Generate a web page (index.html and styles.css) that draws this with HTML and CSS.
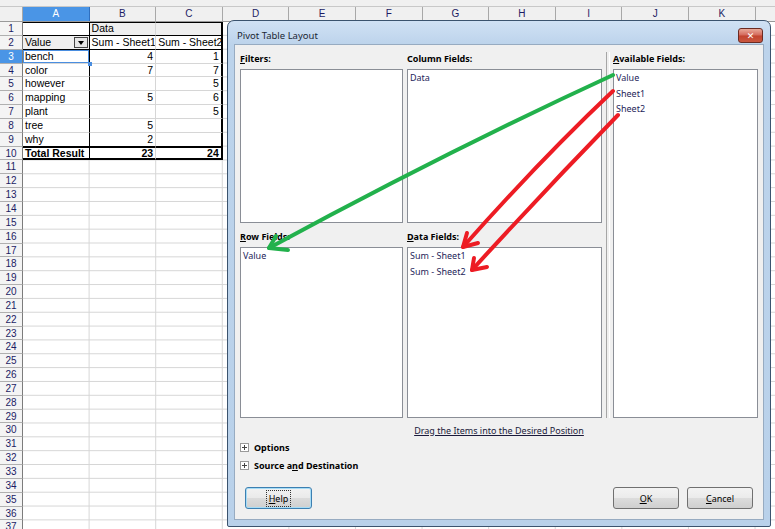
FILE: index.html
```html
<!DOCTYPE html>
<html lang="en">
	<head>
		<meta charset="UTF-8" />
		<meta name="viewport" content="width=device-width, initial-scale=1.0" />
		<title>Pivot Table Layout</title>

		<link rel="stylesheet" href="styles.css">
	</head>
	<body>
		<div class="sheet">
			<div class="topbar"></div>
			<div class="colheads">
				<div class="ch corner"></div>
				<div class="ch sel">A</div>
				<div class="ch">B</div>
				<div class="ch">C</div>
				<div class="ch">D</div>
				<div class="ch">E</div>
				<div class="ch">F</div>
				<div class="ch">G</div>
				<div class="ch">H</div>
				<div class="ch">I</div>
				<div class="ch">J</div>
				<div class="ch">K</div>
				<div class="ch last"></div>
			</div>
			<div class="grid">
				<div class="rowheads">
					<div class="rh">1</div>
					<div class="rh">2</div>
					<div class="rh sel">3</div>
					<div class="rh">4</div>
					<div class="rh">5</div>
					<div class="rh">6</div>
					<div class="rh">7</div>
					<div class="rh">8</div>
					<div class="rh">9</div>
					<div class="rh">10</div>
					<div class="rh">11</div>
					<div class="rh">12</div>
					<div class="rh">13</div>
					<div class="rh">14</div>
					<div class="rh">15</div>
					<div class="rh">16</div>
					<div class="rh">17</div>
					<div class="rh">18</div>
					<div class="rh">19</div>
					<div class="rh">20</div>
					<div class="rh">21</div>
					<div class="rh">22</div>
					<div class="rh">23</div>
					<div class="rh">24</div>
					<div class="rh">25</div>
					<div class="rh">26</div>
					<div class="rh">27</div>
					<div class="rh">28</div>
					<div class="rh">29</div>
					<div class="rh">30</div>
					<div class="rh">31</div>
					<div class="rh">32</div>
					<div class="rh">33</div>
					<div class="rh">34</div>
					<div class="rh">35</div>
					<div class="rh">36</div>
					<div class="rh">37</div>
				</div>
				<div class="cells">
					<div class="pivot">
						<div class="c a r1"></div>
						<div class="c r1 hd">Data</div>
						<div class="c r1 hd end"></div>

						<div class="c a r2 hd field">Value<span class="dd"></span></div>
						<div class="c r2">Sum - Sheet1</div>
						<div class="c r2 end">Sum - Sheet2</div>

						<div class="c a cur">bench</div>
						<div class="c num">4</div>
						<div class="c num end">1</div>

						<div class="c a">color</div>
						<div class="c num">7</div>
						<div class="c num end">7</div>

						<div class="c a">however</div>
						<div class="c num"></div>
						<div class="c num end">5</div>

						<div class="c a">mapping</div>
						<div class="c num">5</div>
						<div class="c num end">6</div>

						<div class="c a">plant</div>
						<div class="c num"></div>
						<div class="c num end">5</div>

						<div class="c a">tree</div>
						<div class="c num">5</div>
						<div class="c num end"></div>

						<div class="c a r9">why</div>
						<div class="c num r9">2</div>
						<div class="c num r9 end"></div>

						<div class="c a total">Total Result</div>
						<div class="c num total">23</div>
						<div class="c num total end">24</div>
					</div>
				</div>
			</div>
		</div>

		<div class="dialog">
			<div class="titlebar">
				<span class="title">Pivot Table Layout</span>
				<button class="close">&#10005;</button>
			</div>
			<div class="client">
				<div class="fields">
					<div class="left">
						<div class="lbl"><u>F</u>ilters:</div>
						<div class="lbl">Column Fields:</div>
						<div class="box"></div>
						<div class="box">
							<div class="item">Data</div>
						</div>
						<div class="lbl"><u>R</u>ow Fields:</div>
						<div class="lbl"><u>D</u>ata Fields:</div>
						<div class="box">
							<div class="item">Value</div>
						</div>
						<div class="box">
							<div class="item">Sum - Sheet1</div>
							<div class="item">Sum - Sheet2</div>
						</div>
					</div>
					<div class="sep"></div>
					<div class="right">
						<div class="lbl"><u>A</u>vailable Fields:</div>
						<div class="box">
							<div class="item">Value</div>
							<div class="item">Sheet1</div>
							<div class="item">Sheet2</div>
						</div>
					</div>
				</div>
				<div class="hint"><u>Drag the Items into the Desired Position</u></div>
				<div class="exp first"><span class="plus"></span>Options</div>
				<div class="exp"><span class="plus"></span>Source a<u>n</u>d Destination</div>
				<div class="buttons">
					<button class="btn help"><span class="focus"><u>H</u>elp</span></button>
					<span class="spacer"></span>
					<button class="btn"><u>O</u>K</button>
					<button class="btn"><u>C</u>ancel</button>
				</div>
			</div>
		</div>

		<svg class="arrows" width="775" height="529" viewBox="0 0 775 529">
			<g fill="none" stroke-width="4" stroke-linecap="round" stroke-linejoin="round">
				<path stroke="#22b14c" d="M613 75 Q450 150 269 248" />
				<path stroke="#22b14c" d="M276 236 L269 248 L288 250" />
				<path stroke="#ed1c24" d="M613 91 Q540 160 463 247" />
				<path stroke="#ed1c24" d="M467 233 L463 247 L478 243" />
				<path stroke="#ed1c24" d="M618 115 Q545 190 472 270" />
				<path stroke="#ed1c24" d="M474 258 L472 270 L487 267" />
			</g>
		</svg>
	</body>
</html>
```

FILE: styles.css
```css
* {
	margin: 0;
	padding: 0;
	box-sizing: border-box;
}
body {
	width: 775px;
	height: 529px;
	overflow: hidden;
	position: relative;
	background-color: #fff;
	font-family: "Liberation Sans", Arial, sans-serif;
}

/* spreadsheet behind the dialog */
.topbar {
	height: 7px;
	background-color: #f0f0f0;
	border-bottom: 1px solid #c8c8c8;
}
.colheads {
	display: grid;
	grid-template-columns: 23px repeat(11, 66.6px) 1fr;
	height: 15px;
	background-color: #f0f0f0;
	border-bottom: 1px solid #9a9a9a;
}
.ch {
	border-right: 1px solid #a8a8a8;
	font-size: 10px;
	line-height: 14px;
	text-align: center;
	color: #1c1c64;
}
.ch.sel {
	background-color: #4a95e6;
	border-right-color: #2f6fbf;
	color: #fff;
}
.ch.last {
	border-right: none;
}
.grid {
	display: flex;
}
.rowheads {
	width: 23px;
	flex-shrink: 0;
}
.rh {
	height: 13.85px;
	background-color: #f4f4f4;
	border-bottom: 1px solid #b0b0b0;
	border-right: 1px solid #7c7c7c;
	font-size: 10px;
	line-height: 13px;
	text-align: center;
	color: #1c1c64;
}
.rh.sel {
	background-color: #4a95e6;
	color: #fff;
}
.cells {
	flex: 1;
	height: 513px;
	background-image:
		linear-gradient(to right, transparent 65.6px, #d6d6d6 65.6px),
		linear-gradient(to bottom, transparent 12.85px, #d6d6d6 12.85px);
	background-size: 66.6px 100%, 100% 13.85px;
}
.pivot {
	display: grid;
	grid-template-columns: 66.6px 66.6px 66.6px;
	grid-template-rows: repeat(10, 13.85px);
	width: 199.8px;
}
.c {
	position: relative;
	background-color: #fff;
	border-right: 1px solid #d6d6d6;
	border-bottom: 1px solid #d6d6d6;
	padding: 0 2px;
	font-size: 10.5px;
	line-height: 12.8px;
	white-space: nowrap;
	overflow: hidden;
	color: #000;
}
.c.num {
	text-align: right;
}
.c.a {
	border-right-color: #000;
}
.c.end {
	border-right: 2px solid #000;
}
.c.r1 {
	border-top: 1px solid #000;
	border-bottom-color: #000;
	line-height: 11.8px;
}
.c.r2,
.c.r9 {
	border-bottom-color: #000;
}
.c.hd {
	background-color: #efefef;
}
.c.field {
	display: flex;
	justify-content: space-between;
	align-items: center;
	padding-right: 1px;
	overflow: visible;
}
.dd {
	width: 14px;
	height: 11px;
	border: 1px solid #444;
	background: #e6e6e6;
	position: relative;
}
.dd::after {
	content: "";
	position: absolute;
	left: 3px;
	top: 3px;
	border-left: 3.5px solid transparent;
	border-right: 3.5px solid transparent;
	border-top: 4px solid #000;
}
.c.cur {
	overflow: visible;
	box-shadow: inset 0 0 0 1px #4a8ee0;
}
.c.cur::after {
	content: "";
	position: absolute;
	right: -3px;
	bottom: -3px;
	width: 4px;
	height: 4px;
	background-color: #4a8ee0;
	z-index: 2;
}
.c.total {
	font-weight: bold;
	border-top: 1px solid #000;
	border-bottom: 2px solid #000;
	line-height: 11px;
}

/* dialog window */
.dialog {
	position: absolute;
	left: 227px;
	top: 20px;
	width: 544px;
	height: 507px;
	display: flex;
	flex-direction: column;
	padding: 0 6px 6px;
	border: 1px solid #3b536e;
	border-radius: 7px 7px 2px 2px;
	background: linear-gradient(#d0e1f4, #bcd3eb 24px, #b9d1ea);
	font-family: "Noto Sans", "Liberation Sans", sans-serif;
	font-size: 9px;
	z-index: 5;
}
.titlebar {
	height: 23px;
	display: flex;
	align-items: flex-start;
	padding-left: 3px;
}
.title {
	flex: 1;
	padding-top: 8px;
	font-size: 9.5px;
	line-height: 13px;
	color: #1b2633;
}
.close {
	width: 25px;
	height: 15px;
	margin: 7px 1px 0 0;
	border: 1px solid #6b2b22;
	border-radius: 3px;
	background: linear-gradient(#e9a999, #d3685a 48%, #c2432e 52%, #c9573f);
	color: #fff;
	font-family: "DejaVu Sans", sans-serif;
	font-size: 9px;
	font-weight: bold;
	line-height: 12px;
}
.client {
	flex: 1;
	display: flex;
	flex-direction: column;
	padding: 6px 5px 0;
	border: 1px solid #97abc1;
	background-color: #f0f0f0;
	color: #000;
}
.fields {
	display: flex;
	height: 367px;
}
.left {
	display: grid;
	grid-template-columns: 163px 195px;
	grid-template-rows: 18px 154px 24px 171px;
	column-gap: 4px;
}
.lbl {
	align-self: end;
	padding-bottom: 4px;
	font-weight: bold;
	line-height: 12px;
}
.box {
	background-color: #fff;
	border: 1px solid #8a8e96;
	padding: 0 2px;
}
.item {
	line-height: 15.5px;
	color: #1e1e5a;
}
.sep {
	width: 11px;
	display: flex;
	justify-content: center;
	padding-top: 1px;
}
.sep::before {
	content: "";
	width: 2px;
	border-left: 1px solid #a6a6a6;
	border-right: 1px solid #fff;
}
.right {
	width: 145px;
	display: flex;
	flex-direction: column;
}
.right .lbl {
	align-self: stretch;
	height: 18px;
	padding-top: 2px;
}
.right .box {
	flex: 1;
}
.hint {
	margin-top: 6px;
	text-align: center;
	line-height: 14px;
	color: #1a1a3a;
}
.exp {
	display: flex;
	align-items: center;
	height: 14px;
	margin-top: 4px;
	font-weight: bold;
}
.exp.first {
	margin-top: 2px;
}
.plus {
	width: 9px;
	height: 9px;
	margin-right: 5px;
	border: 1px solid #9a9a9a;
	background:
		linear-gradient(#444, #444) center / 5px 1px no-repeat,
		linear-gradient(#444, #444) center / 1px 5px no-repeat,
		#fff;
}
.buttons {
	display: flex;
	gap: 8px;
	margin-top: 15px;
	padding: 0 5px;
}
.spacer {
	flex: 1;
}
.btn {
	width: 66px;
	height: 22px;
	border: 1px solid #707070;
	border-radius: 3px;
	background: linear-gradient(#f3f3f3, #ebebeb 48%, #dcdcdc 52%, #cfcfcf);
	font-family: "Noto Sans", "Liberation Sans", sans-serif;
	font-size: 9px;
	color: #000;
}
.btn.help {
	width: 67px;
	border-color: #3c7fb1;
	box-shadow: inset 0 0 0 1px #a6dcf6;
	background: linear-gradient(#f2f2f2, #eaeaea 48%, #dbdbdb 52%, #cfcfcf);
}
.focus {
	padding: 1px 2px;
	outline: 1px dotted #333;
}
.arrows {
	position: absolute;
	left: 0;
	top: 0;
	z-index: 10;
	pointer-events: none;
}
```
